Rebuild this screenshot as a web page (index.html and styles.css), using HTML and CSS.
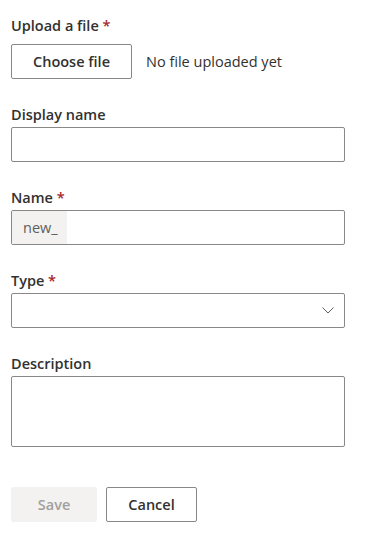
FILE: index.html
```html
<!DOCTYPE html>
<html lang="en">
<head>
<meta charset="utf-8">
<title>Upload</title>
<link rel="stylesheet" href="styles.css">
</head>
<body>
<form class="form">
  <div class="field field-upload">
    <label class="label required">Upload a file</label>
    <div class="upload-row">
      <button type="button" class="btn btn-default btn-choose">Choose file</button>
      <span class="upload-status">No file uploaded yet</span>
    </div>
  </div>

  <div class="field">
    <label class="label">Display name</label>
    <div class="textbox"><input class="textbox-input" type="text"></div>
  </div>

  <div class="field">
    <label class="label required">Name</label>
    <div class="textbox">
      <span class="prefix">new_</span>
      <input class="textbox-input" type="text">
    </div>
  </div>

  <div class="field">
    <label class="label required">Type</label>
    <div class="textbox dropdown">
      <span class="dropdown-title"></span>
      <svg class="chevron" width="12" height="7" viewBox="0 0 12 7" aria-hidden="true">
        <path d="M0.5 0.5 L6 6 L11.5 0.5" fill="none" stroke="#605e5c" stroke-width="1"/>
      </svg>
    </div>
  </div>

  <div class="field">
    <label class="label">Description</label>
    <div class="textbox textarea"><textarea class="textarea-input"></textarea></div>
  </div>

  <div class="actions">
    <button type="button" class="btn btn-disabled btn-save" disabled>Save</button>
    <button type="button" class="btn btn-default btn-cancel">Cancel</button>
  </div>
</form>
</body>
</html>
```

FILE: styles.css
```css
* {
  box-sizing: border-box;
}

html, body {
  margin: 0;
  padding: 0;
  background: #ffffff;
}

body {
  font-family: "Open Sans", "Noto Sans", "Liberation Sans", sans-serif;
  font-size: 14.5px;
  color: #323130;
}

.form {
  width: 345px;
  padding: 15px 0 0 11px;
  display: flex;
  flex-direction: column;
}

.field {
  display: flex;
  flex-direction: column;
  margin-bottom: 25px;
}

.label {
  display: block;
  font-weight: 600;
  font-size: 14.5px;
  line-height: 21px;
  margin-bottom: 2px;
  color: #323130;
}

.field-upload .label {
  margin-bottom: 8px;
}

.required::after {
  content: " *";
  color: #a4262c;
}

.upload-row {
  display: flex;
  align-items: center;
}

.upload-status {
  margin-left: 14px;
  font-size: 14.5px;
  color: #323130;
}

.btn {
  height: 35px;
  font-family: inherit;
  font-size: 14.5px;
  font-weight: 600;
  border-radius: 2px;
  padding: 0;
  display: inline-flex;
  align-items: center;
  justify-content: center;
}

.btn-default {
  background: #ffffff;
  border: 1px solid #8a8886;
  color: #323130;
}

.btn-disabled {
  background: #f3f2f1;
  border: 1px solid #f3f2f1;
  color: #a19f9d;
}

.btn-choose {
  width: 121px;
}

.btn-save {
  width: 86px;
}

.btn-cancel {
  width: 91px;
}

.textbox {
  display: flex;
  align-items: stretch;
  width: 334px;
  height: 35px;
  border: 1px solid #8a8886;
  border-radius: 2px;
  background: #ffffff;
  overflow: hidden;
}

.textbox-input {
  flex: 1;
  min-width: 0;
  border: none;
  outline: none;
  background: transparent;
  font-family: inherit;
  font-size: 14.5px;
  padding: 0 9px;
  color: #323130;
}

.prefix {
  display: flex;
  align-items: center;
  background: #f3f2f1;
  color: #605e5c;
  padding: 0 11px;
  width: 55px;
  font-size: 14.5px;
}

.dropdown {
  align-items: center;
  justify-content: space-between;
  padding: 0 9px 0 9px;
}

.dropdown-title {
  flex: 1;
}

.chevron {
  display: block;
  margin-right: 1px;
}

.textarea {
  height: 71px;
}

.textarea-input {
  flex: 1;
  border: none;
  outline: none;
  resize: none;
  background: transparent;
  font-family: inherit;
  font-size: 14.5px;
  padding: 6px 9px;
}

.actions {
  display: flex;
  gap: 9px;
  margin-top: 15px;
}
```
